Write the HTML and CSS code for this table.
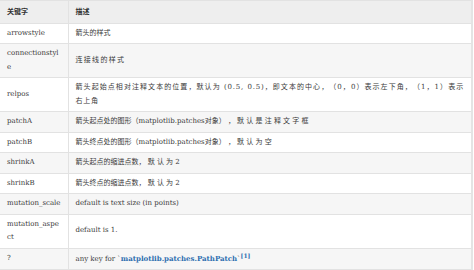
FILE: index.html
```html
<!DOCTYPE html>
<html lang="zh-CN">
<head>
<meta charset="utf-8">
<link rel="stylesheet" href="styles.css">
</head>
<body>
<table class="kw">
  <colgroup><col class="c1"><col class="c2"></colgroup>
  <thead>
    <tr><th>关键字</th><th>描述</th></tr>
  </thead>
  <tbody>
    <tr><td>arrowstyle</td><td>箭头的样式</td></tr>
    <tr><td>connectionstyle</td><td><span class="mid">连接线的样式</span></td></tr>
    <tr><td>relpos</td><td class="just">箭头起始点相对注释文本的位置，默认为 (0.5, 0.5)，即文本的中心，（0，0）表示左下角，（1，1）表示<span class="nowrap">右上角</span></td></tr>
    <tr><td>patchA</td><td>箭头起点处的图形（matplotlib.patches对象<span class="wide">），默认是注释文字框</span></td></tr>
    <tr><td>patchB</td><td>箭头终点处的图形（matplotlib.patches对象<span class="wide">），默认为空</span></td></tr>
    <tr><td>shrinkA</td><td>箭头起点的缩进点数<span class="wide">，默认为2</span></td></tr>
    <tr><td>shrinkB</td><td>箭头终点的缩进点数<span class="wide">，默认为2</span></td></tr>
    <tr><td>mutation_scale</td><td>default is text size (in points)</td></tr>
    <tr><td>mutation_aspect</td><td>default is 1.</td></tr>
    <tr><td>?</td><td>any key for `<a class="ref">matplotlib.patches.PathPatch</a>`<sup class="ref">[1]</sup></td></tr>
  </tbody>
</table>
</body>
</html>
```

FILE: styles.css
```css
html, body {
  margin: 0;
  padding: 0;
  background: #ffffff;
}
.kw {
  border-collapse: collapse;
  width: 473px;
  table-layout: fixed;
  font-family: "DejaVu Serif", "Noto Sans CJK SC", serif;
  font-size: 7px;
  color: #3a3a3a;
  border-right: 2px solid #e4e4e4;
  text-spacing-trim: space-all;
}
.kw col.c1 { width: 68px; }
.kw th, .kw td {
  border: 1px solid #e2e2e2;
  border-left: none;
  padding: 3px 7px;
  line-height: 13.5px;
  text-align: left;
  vertical-align: middle;
  word-break: break-all;
}
.kw th {
  background: #eeeeee;
  font-family: "Noto Sans CJK SC", sans-serif;
  font-weight: bold;
  color: #333;
  padding-top: 4px;
  padding-bottom: 4px;
}
.kw tbody tr:nth-child(even) td { background: #f6f6f6; }
.kw td.just {
  text-align: justify;
  letter-spacing: 0.8px;
}
.nowrap { white-space: nowrap; }
.mid { letter-spacing: 1.3px; }
.wide { letter-spacing: 2.2px; }
.ref {
  color: #2e6fb0;
  font-weight: bold;
}
sup.ref {
  font-size: 6px;
  line-height: 0;
  vertical-align: 3px;
}
```
